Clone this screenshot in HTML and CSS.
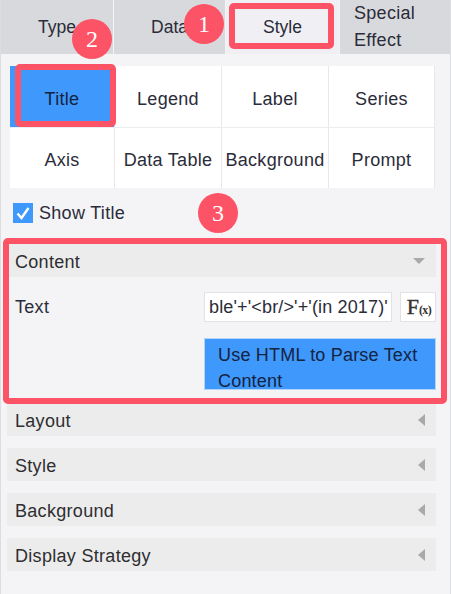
FILE: index.html
```html
<!DOCTYPE html>
<html lang="en">
<head>
  <meta charset="UTF-8">
  <meta name="viewport" content="width=device-width, initial-scale=1.0">
  <title>Chart Style Settings</title>
  <link rel="stylesheet" href="styles.css">
</head>
<body>
  <div class="panel">
    <div class="tabs">
      <div class="tab">Type</div>
      <div class="tab">Data</div>
      <div class="tab active">Style</div>
      <div class="tab special">Special Effect</div>
    </div>

    <div class="options">
      <div class="option selected">Title</div>
      <div class="option">Legend</div>
      <div class="option">Label</div>
      <div class="option">Series</div>
      <div class="option">Axis</div>
      <div class="option">Data Table</div>
      <div class="option">Background</div>
      <div class="option">Prompt</div>
    </div>

    <label class="show-title">
      <span class="checkbox">
        <svg width="20" height="20" viewBox="0 0 20 20"><path d="M4.5 10.5l4 4.5 7-10" fill="none" stroke="#fff" stroke-width="2.4"/></svg>
      </span>
      Show Title
    </label>

    <div class="section open">
      <span>Content</span>
      <i class="arrow-down"></i>
    </div>
    <div class="content-body">
      <div class="text-row">
        <span class="text-label">Text</span>
        <div class="text-input"><span>ble'+'&lt;br/&gt;'+'(in 2017)'</span></div>
        <div class="fx"><b>F</b><small>(x)</small></div>
      </div>
      <div class="parse-btn">Use HTML to Parse Text Content</div>
    </div>

    <div class="section"><span>Layout</span><i class="arrow-left"></i></div>
    <div class="section"><span>Style</span><i class="arrow-left"></i></div>
    <div class="section"><span>Background</span><i class="arrow-left"></i></div>
    <div class="section"><span>Display Strategy</span><i class="arrow-left"></i></div>
  </div>

  <!-- annotations on top of the screenshot -->
  <div class="mark mark-1"></div>
  <div class="mark mark-2"></div>
  <div class="mark mark-3"></div>
  <div class="step step-1">1</div>
  <div class="step step-2">2</div>
  <div class="step step-3">3</div>
</body>
</html>
```

FILE: styles.css
```css
html, body {
  margin: 0;
  height: 100%;
}

body {
  position: relative;
  overflow: hidden;
  font-family: "Liberation Sans", Arial, sans-serif;
  font-size: 18px;
  letter-spacing: 0.3px;
  color: #2b2c3a;
  background-color: #f4f4f7;
}

.panel {
  height: 594px;
  box-sizing: border-box;
  border-left: 1px solid #dcdde0;
  border-right: 1px solid #dcdde0;
}

/* tabs */
.tabs {
  display: grid;
  grid-template-columns: 112px 111px 113px 1fr;
  gap: 1px;
  height: 51px;
}

.tab {
  display: flex;
  align-items: center;
  justify-content: center;
  font-size: 17.5px;
  letter-spacing: 0;
  background-color: #d8d9dc;
}

.tab.active {
  background-color: #f0f0f4;
}

.tab.special {
  box-sizing: border-box;
  padding: 0 20px 0 14px;
  justify-content: flex-start;
  font-size: 18px;
  letter-spacing: 0.3px;
  line-height: 27px;
}

/* option grid */
.options {
  display: grid;
  grid-template-columns: 105px 107px 107px 106px;
  grid-template-rows: 61px 60px;
  gap: 1px 0;
  margin: 15px 0 0 9px;
  width: 425px;
  background-color: #ececf0;
}

.option {
  display: flex;
  align-items: center;
  justify-content: center;
  box-sizing: border-box;
  padding-top: 5px;
  background-color: #fff;
  border-right: 1px solid #e8e8ec;
}

.option.selected {
  background-color: #3f98fb;
  color: #14233f;
}

.show-title {
  display: flex;
  align-items: center;
  gap: 6px;
  height: 20px;
  margin: 15px 0 21px 12px;
}

.checkbox {
  display: block;
  width: 20px;
  height: 20px;
  background-color: #3f98fb;
}

.checkbox svg {
  display: block;
}

/* collapsible sections */
.section {
  display: flex;
  align-items: center;
  justify-content: space-between;
  box-sizing: border-box;
  width: 429px;
  height: 33px;
  margin: 0 0 12px 6px;
  padding: 3px 11px 0 8px;
  background-color: #ececed;
  color: #2e2e30;
}

.section.open {
  margin-bottom: 0;
}

.arrow-down {
  width: 0;
  height: 0;
  margin-top: -3px;
  border-left: 6px solid transparent;
  border-right: 6px solid transparent;
  border-top: 6px solid #a9a9ab;
}

.arrow-left {
  width: 0;
  height: 0;
  margin-top: -3px;
  border-top: 6px solid transparent;
  border-bottom: 6px solid transparent;
  border-right: 7px solid #a9a9ab;
}

.content-body {
  height: 126px;
  margin-left: 6px;
  width: 429px;
  box-sizing: border-box;
  padding: 15px 0 0 8px;
}

.text-row {
  display: flex;
  align-items: center;
  height: 30px;
}

.text-label {
  width: 189px;
}

.text-input {
  box-sizing: border-box;
  width: 188px;
  height: 30px;
  padding-left: 4px;
  line-height: 29px;
  letter-spacing: 0.15px;
  overflow: hidden;
  white-space: nowrap;
  background-color: #fff;
  border: 1px solid #e2e2e6;
}

.fx {
  box-sizing: border-box;
  width: 36px;
  height: 30px;
  margin-left: 8px;
  padding-left: 2px;
  text-align: center;
  line-height: 27px;
  letter-spacing: 0;
  font-family: "Liberation Serif", serif;
  color: #333;
  background-color: #fff;
  border: 1px solid #e2e2e6;
}

.fx b {
  font-size: 22px;
  font-weight: normal;
  -webkit-text-stroke: 0.4px #333;
}

.fx small {
  font-size: 12px;
  font-weight: bold;
  letter-spacing: -0.5px;
}

.parse-btn {
  box-sizing: border-box;
  width: 232px;
  height: 52px;
  margin: 16px 0 0 189px;
  padding: 3px 10px 0 13px;
  line-height: 26px;
  letter-spacing: 0.2px;
  overflow: hidden;
  color: #14233f;
  background-color: #3f98fb;
  border: 1px solid #b5d4f5;
}

/* red annotations */
.mark {
  position: absolute;
  box-sizing: border-box;
  border: 6px solid #fd5367;
  border-radius: 5px;
}

.mark-1 {
  left: 229px;
  top: 3px;
  width: 105px;
  height: 46px;
}

.mark-2 {
  left: 15px;
  top: 64px;
  width: 101px;
  height: 63px;
}

.mark-3 {
  left: 3px;
  top: 238px;
  width: 444px;
  height: 166px;
}

.step {
  position: absolute;
  width: 40px;
  height: 40px;
  border-radius: 50%;
  text-align: center;
  line-height: 40px;
  letter-spacing: 0;
  font-family: "Liberation Serif", serif;
  font-size: 24px;
  color: #fff;
  background-color: #fd5367;
}

.step-1 {
  left: 184px;
  top: 4px;
}

.step-2 {
  left: 72px;
  top: 19px;
}

.step-3 {
  left: 198px;
  top: 193px;
}
```
